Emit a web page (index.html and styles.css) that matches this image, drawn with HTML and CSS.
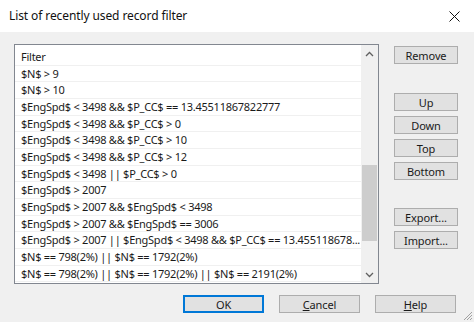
FILE: index.html
```html
<!DOCTYPE html>
<html>
<head>
<meta charset="utf-8">
<link rel="stylesheet" href="styles.css">
</head>
<body>
<div class="dialog">
  <div class="titlebar">
    <span class="title">List of recently used record filter</span>
    <svg class="close" width="11" height="11" viewBox="0 0 11 11"><path d="M0.5 0.5 L10.5 10.5 M10.5 0.5 L0.5 10.5" stroke="#111" stroke-width="1" fill="none"/></svg>
  </div>
  <div class="main">
    <div class="list">
      <div class="rows">
        <div class="row">Filter</div>
        <div class="row">$N$ &gt; 9</div>
        <div class="row">$N$ &gt; 10</div>
        <div class="row">$EngSpd$ &lt; 3498 &amp;&amp; $P_CC$ == 13.45511867822777</div>
        <div class="row">$EngSpd$ &lt; 3498 &amp;&amp; $P_CC$ &gt; 0</div>
        <div class="row">$EngSpd$ &lt; 3498 &amp;&amp; $P_CC$ &gt; 10</div>
        <div class="row">$EngSpd$ &lt; 3498 &amp;&amp; $P_CC$ &gt; 12</div>
        <div class="row">$EngSpd$ &lt; 3498 || $P_CC$ &gt; 0</div>
        <div class="row">$EngSpd$ &gt; 2007</div>
        <div class="row">$EngSpd$ &gt; 2007 &amp;&amp; $EngSpd$ &lt; 3498</div>
        <div class="row">$EngSpd$ &gt; 2007 &amp;&amp; $EngSpd$ == 3006</div>
        <div class="row">$EngSpd$ &gt; 2007 || $EngSpd$ &lt; 3498 &amp;&amp; $P_CC$ == 13.455118678...</div>
        <div class="row">$N$ == 798(2%) || $N$ == 1792(2%)</div>
        <div class="row">$N$ == 798(2%) || $N$ == 1792(2%) || $N$ == 2191(2%)</div>
      </div>
      <div class="scrollbar">
        <div class="arrow"><svg width="9" height="6" viewBox="0 0 9 6"><path d="M1 5 L4.5 1.5 L8 5" stroke="#606060" stroke-width="1.3" fill="none"/></svg></div>
        <div class="track">
          <div class="thumb"></div>
        </div>
        <div class="arrow"><svg width="9" height="6" viewBox="0 0 9 6"><path d="M1 1 L4.5 4.5 L8 1" stroke="#606060" stroke-width="1.3" fill="none"/></svg></div>
      </div>
    </div>
    <div class="side">
      <button class="btn">Remove</button>
      <div class="group g1">
        <button class="btn">Up</button>
        <button class="btn">Down</button>
        <button class="btn">Top</button>
        <button class="btn">Bottom</button>
      </div>
      <div class="group g2">
        <button class="btn">Export...</button>
        <button class="btn">Import...</button>
      </div>
    </div>
  </div>
  <div class="footer">
    <button class="btn wide default">OK</button>
    <button class="btn wide"><u>C</u>ancel</button>
    <button class="btn wide"><u>H</u>elp</button>
  </div>
  <svg class="grip" width="12" height="12" viewBox="0 0 12 12"><path d="M11 3 L3 11 M11 6 L6 11 M11 9 L9 11" stroke="#a0a0a0" stroke-width="1" fill="none"/></svg>
</div>
</body>
</html>
```

FILE: styles.css
```css
* { box-sizing: border-box; }
html, body { margin: 0; padding: 0; }
body {
  width: 474px;
  height: 322px;
  overflow: hidden;
  background: #f0f0f0;
  font-family: "Noto Sans", "Open Sans", sans-serif;
  color: #1a1a1a;
}
.dialog {
  position: relative;
  width: 474px;
  height: 322px;
  background: #f0f0f0;
}
.titlebar {
  height: 32px;
  background: #ffffff;
  display: flex;
  align-items: center;
  justify-content: space-between;
  padding: 0 14px 0 9px;
}
.title {
  font-size: 12px;
  letter-spacing: -0.1px;
  color: #111;
  padding-bottom: 1px;
}
.close { display: block; margin-top: 1px; }
.main {
  display: flex;
  padding: 12px 0 0 14px;
}
.list {
  width: 365px;
  height: 240px;
  border: 1px solid #828790;
  background: #fff;
  display: flex;
}
.rows {
  flex: 1;
  padding-top: 4px;
  overflow: hidden;
}
.row {
  height: 16.67px;
  line-height: 16px;
  font-size: 11px;
  letter-spacing: -0.25px;
  padding-left: 6px;
  white-space: nowrap;
  border-bottom: 1px solid #f0f0f0;
  color: #1a1a1a;
}
.scrollbar {
  width: 17px;
  background: #f0f0f0;
  display: flex;
  flex-direction: column;
}
.arrow {
  height: 17px;
  display: flex;
  align-items: center;
  justify-content: center;
}
.track {
  flex: 1;
  padding-top: 103px;
}
.thumb {
  height: 76px;
  margin: 0 1px;
  background: #cdcdcd;
}
.side {
  margin-left: 15px;
  padding-top: 2px;
  display: flex;
  flex-direction: column;
}
.group {
  display: flex;
  flex-direction: column;
  gap: 5px;
}
.g1 { margin-top: 29px; }
.g2 { margin-top: 28px; }
.btn {
  width: 64px;
  height: 18px;
  padding: 0;
  margin: 0;
  border: 1px solid #adadad;
  background: #e1e1e1;
  font-family: "Noto Sans", "Open Sans", sans-serif;
  font-size: 11px;
  letter-spacing: -0.1px;
  line-height: 15px;
  color: #1a1a1a;
}
.footer {
  display: flex;
  gap: 15px;
  padding: 11px 0 0 183px;
}
.wide { width: 81px; }
.default {
  border: 1px solid #0078d7;
  box-shadow: inset 0 0 0 1px #0078d7;
}
.grip {
  position: absolute;
  right: 1px;
  bottom: 1px;
}
```
